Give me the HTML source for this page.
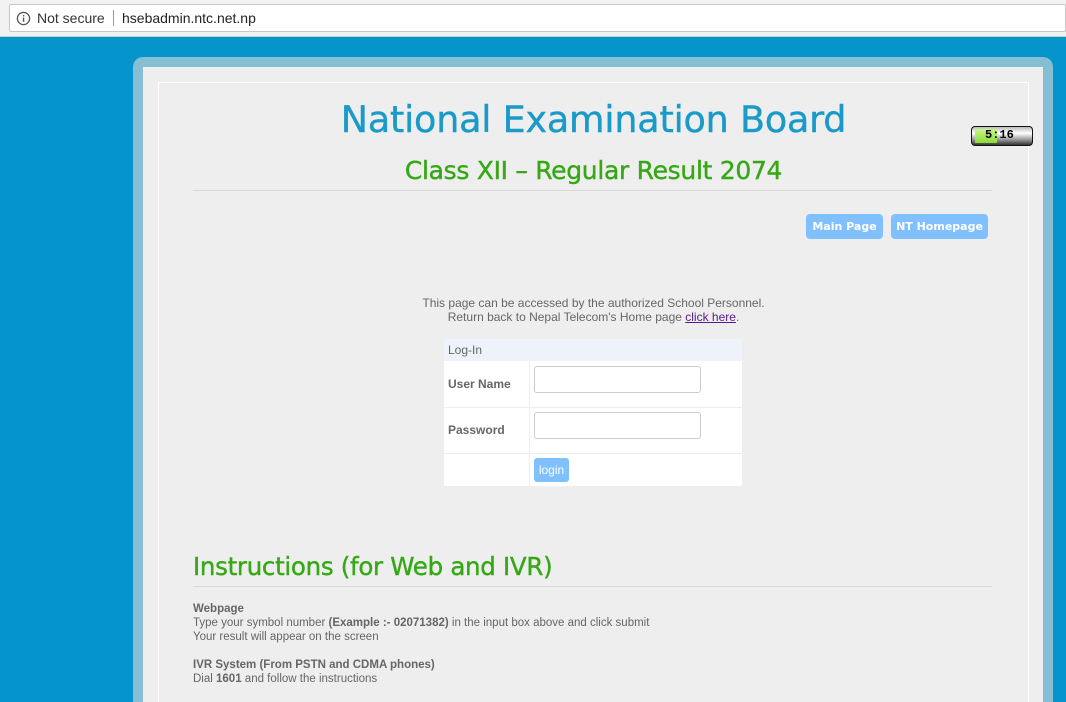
<!DOCTYPE html>
<html><head><meta charset="utf-8"><style>
*{margin:0;padding:0;box-sizing:border-box}
html,body{width:1066px;height:702px;overflow:hidden}
body{background:#0595cc;font-family:"Liberation Sans",sans-serif;position:relative}
.bar{position:absolute;left:0;top:0;width:1066px;height:37px;background:#f2f2f2;border-bottom:1px solid #ccc}
.url{position:absolute;left:9px;top:4px;width:1057px;height:28px;background:#fff;border:1px solid #c8c8c8;border-radius:2px;font-size:14px;color:#333}
.abs{position:absolute}
.outer{position:absolute;left:133px;top:57px;width:920px;height:645px;background:#86bfd4;border-radius:10px 10px 0 0}
.inner{position:absolute;left:143px;top:67px;width:900px;height:635px;background:#eeeeee}
.frame{position:absolute;left:158px;top:82px;width:871px;height:620px;border:1px solid #fff;border-bottom:none}
.dv{font-family:"DejaVu Sans",sans-serif}
.btn{position:absolute;top:214px;height:25px;background:#80c0ff;border-radius:4px;color:#fff;font:bold 11px "DejaVu Sans",sans-serif;text-align:center;line-height:25px}
.small{font-family:"Liberation Sans",sans-serif;font-size:11.5px;color:#666;position:absolute;left:193px;line-height:14px}
input{position:absolute;width:167px;height:27px;border:1px solid #ccc;border-radius:3px;background:#fff}
</style></head><body>
<div class="bar"><div class="url">
<svg class="abs" style="left:6px;top:6px" width="15" height="15" viewBox="0 0 16 16"><circle cx="8" cy="8" r="6.5" fill="none" stroke="#555" stroke-width="1.4"/><rect x="7.3" y="7" width="1.5" height="4.5" fill="#555"/><rect x="7.3" y="4.3" width="1.5" height="1.5" fill="#555"/></svg>
<span class="abs" style="left:27px;top:5px">Not secure</span>
<span class="abs" style="left:103px;top:5px;width:1px;height:16px;background:#999"></span>
<span class="abs" style="left:112px;top:5px;color:#222">hsebadmin.ntc.net.np</span>
</div></div>
<div class="outer"></div><div class="inner"></div><div class="frame"></div>
<div class="abs dv" style="left:158px;top:98px;width:871px;text-align:center;font-size:36.5px;color:#1a9ac9;letter-spacing:-0.2px;-webkit-text-stroke:0.4px #1a9ac9">National Examination Board</div>
<div class="abs dv" style="left:158px;top:156px;width:871px;text-align:center;font-size:25px;color:#36a816;letter-spacing:-0.3px;-webkit-text-stroke:0.4px #36a816">Class XII – Regular Result 2074</div>
<div class="abs" style="left:193px;top:190px;width:799px;height:1px;background:#d8d8d8"></div>
<div class="abs" style="left:971px;top:126px;width:62px;height:20px;border-radius:4px;background:linear-gradient(#bbb,#fff 35%,#999 70%,#333);border:1px solid #111"></div>
<div class="abs" style="left:975px;top:129px;width:22px;height:14px;background:linear-gradient(#c8f58a,#8bdc3a)"></div>
<div class="abs" style="left:985px;top:128px;font:bold 12px 'Liberation Mono',monospace;color:#000">5:16</div>
<div class="btn" style="left:806px;width:77px">Main Page</div>
<div class="btn" style="left:891px;width:97px">NT Homepage</div>
<div class="abs" style="left:158px;top:296px;width:871px;text-align:center;font-size:12px;color:#666;line-height:14px">This page can be accessed by the authorized School Personnel.<br>Return back to Nepal Telecom's Home page <span style="color:#551a8b;text-decoration:underline">click here</span>.</div>
<div class="abs" style="left:444px;top:339px;width:298px;height:147px;background:#fff"></div>
<div class="abs" style="left:444px;top:339px;width:298px;height:22px;background:#eef3fb;font-size:12px;color:#666;padding:4px 4px">Log-In</div>
<div class="abs" style="left:529px;top:361px;width:1px;height:125px;background:#eee"></div>
<div class="abs" style="left:444px;top:407px;width:298px;height:1px;background:#eee"></div>
<div class="abs" style="left:444px;top:453px;width:298px;height:1px;background:#eee"></div>
<div class="abs" style="left:448px;top:377px;font-size:12px;font-weight:bold;color:#666">User Name</div>
<div class="abs" style="left:448px;top:423px;font-size:12px;font-weight:bold;color:#666">Password</div>
<input style="left:534px;top:366px"><input style="left:534px;top:412px">
<div class="abs" style="left:534px;top:458px;width:35px;height:24px;background:#80c0ff;border-radius:3px;color:#fff;font-size:12px;text-align:center;line-height:24px">login</div>
<div class="abs dv" style="left:193px;top:552px;font-size:24.5px;color:#36a816;letter-spacing:-0.3px;-webkit-text-stroke:0.4px #36a816">Instructions (for Web and IVR)</div>
<div class="abs" style="left:193px;top:586px;width:799px;height:1px;background:#d8d8d8"></div>
<div class="small" style="top:602px"><b>Webpage</b><br>Type your symbol number <b>(Example :- 02071382)</b> in the input box above and click submit<br>Your result will appear on the screen</div>
<div class="small" style="top:658px"><b>IVR System (From PSTN and CDMA phones)</b><br>Dial <b>1601</b> and follow the instructions</div>
</body></html>
